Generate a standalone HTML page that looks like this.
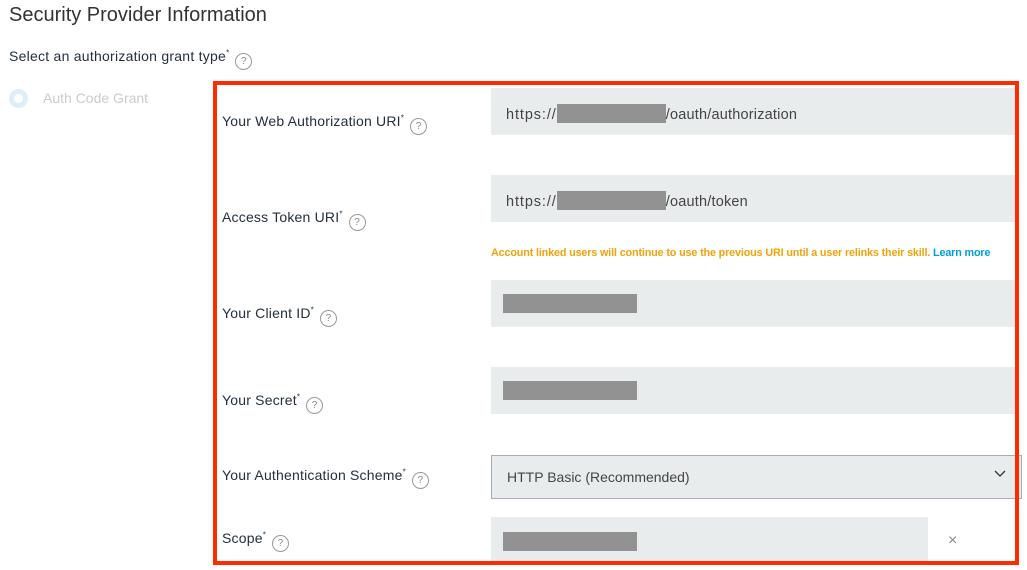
<!DOCTYPE html>
<html><head><style>
body{margin:0;width:1027px;height:570px;background:#fff;font-family:"Liberation Sans",sans-serif;color:#232f3e;position:relative;overflow:hidden}
.a{position:absolute}
.h{left:9px;top:4px;font-size:20px;color:#333;}
.lbl{font-size:14px;color:#232f3e;white-space:nowrap}
.lbl sup{font-size:8px}
.q{display:inline-block;width:15px;height:15px;border:1px solid #999;border-radius:50%;font-size:10px;text-align:center;line-height:15px;color:#888;vertical-align:-3px;margin-left:6px}
.in{background:#e9eced;left:491px;width:527px;height:47px}
.tx{font-size:14.5px;color:#444;left:506px;letter-spacing:0.2px}
.bar{background:#929292;height:19px}
.hs{letter-spacing:0.9px}
</style></head><body>
<div class="a h">Security Provider Information</div>
<div class="a lbl" style="left:9px;top:48px;letter-spacing:0.25px">Select an authorization grant type<sup>*</sup><span class="q">?</span></div>
<div class="a" style="left:9px;top:89px;width:19px;height:19px;border-radius:50%;background:#dceff8"><div class="a" style="left:5px;top:5px;width:9px;height:9px;border-radius:50%;background:#fff"></div></div>
<div class="a" style="left:43px;top:90px;font-size:14px;color:#c8ccce">Auth Code Grant</div>

<div class="a in" style="top:88px"></div>
<div class="a in" style="top:175px"></div>
<div class="a in" style="top:280px"></div>
<div class="a in" style="top:367px"></div>
<div class="a in" style="top:455px;height:42px;border:1px solid #aab;width:529px"></div>
<div class="a in" style="top:517px;width:437px"></div>

<div class="a tx" style="top:104px"><span class="hs">https://</span><span style="display:inline-block;width:109px;height:19px;background:#929292;vertical-align:-4px"></span>/oauth/authorization</div>
<div class="a tx" style="top:191px"><span class="hs">https://</span><span style="display:inline-block;width:109px;height:19px;background:#929292;vertical-align:-4px"></span>/oauth/token</div>
<div class="a" style="left:491px;top:247px;font-size:10.8px;font-weight:bold;color:#f0a30a;white-space:nowrap;letter-spacing:-0.15px">Account linked users will continue to use the previous URI until a user relinks their skill. <span style="color:#00a0d6">Learn more</span></div>
<div class="a bar" style="left:503px;top:294px;width:134px"></div>
<div class="a bar" style="left:503px;top:381px;width:134px"></div>
<div class="a bar" style="left:503px;top:532px;width:134px"></div>
<div class="a tx" style="left:507px;top:469px;font-size:14px;letter-spacing:0">HTTP Basic (Recommended)</div>
<svg class="a" style="left:994px;top:470px" width="12" height="8"><path d="M1 1l5 5 5-5" stroke="#333" fill="none" stroke-width="1.3"/></svg>
<div class="a" style="left:948px;top:532px;font-size:16px;color:#888">×</div>

<div class="a lbl" style="left:222px;top:113px;letter-spacing:0.2px">Your Web Authorization URI<sup>*</sup><span class="q">?</span></div>
<div class="a lbl" style="left:222px;top:209px;letter-spacing:0.2px">Access Token URI<sup>*</sup><span class="q">?</span></div>
<div class="a lbl" style="left:222px;top:305px;letter-spacing:0.2px">Your Client ID<sup>*</sup><span class="q">?</span></div>
<div class="a lbl" style="left:222px;top:392px;letter-spacing:0.2px">Your Secret<sup>*</sup><span class="q">?</span></div>
<div class="a lbl" style="left:222px;top:467px;letter-spacing:0.2px">Your Authentication Scheme<sup>*</sup><span class="q">?</span></div>
<div class="a lbl" style="left:222px;top:530px;letter-spacing:0.2px">Scope<sup>*</sup><span class="q">?</span></div>

<div class="a" style="left:213px;top:81px;width:798px;height:476px;border:4px solid #ff2a00"></div>
</body></html>
